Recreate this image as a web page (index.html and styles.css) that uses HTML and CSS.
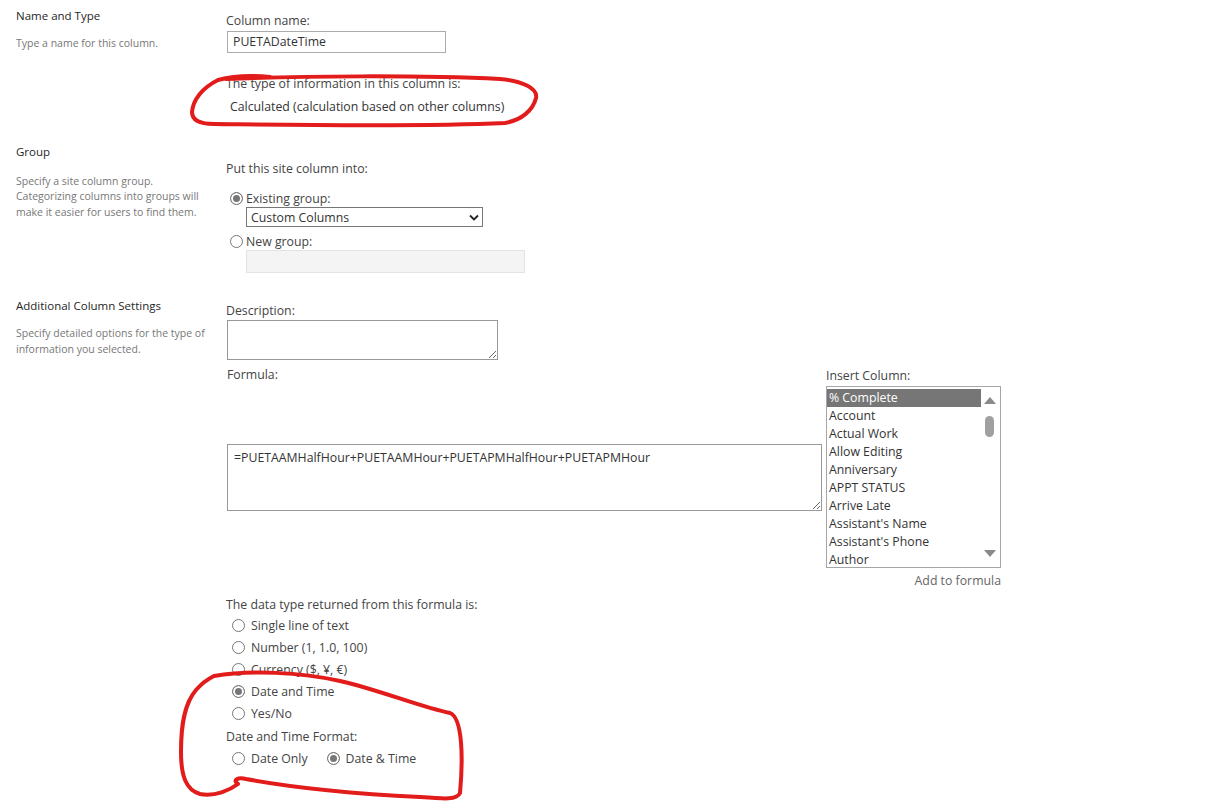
FILE: index.html
```html
<!DOCTYPE html>
<html lang="en">
<head>
    <meta charset="UTF-8">
    <title>Create Site Column</title>
    <link rel="stylesheet" href="styles.css">
</head>
<body>
    <div class="page">
        <!-- Name and Type -->
        <div class="section sec-name">
            <div class="side">
                <div class="side-title">Name and Type</div>
                <div class="side-desc">Type a name for this column.</div>
            </div>
            <div class="main">
                <div class="label">Column name:</div>
                <input class="text-input name-input" type="text" value="PUETADateTime">
                <div class="label type-label">The type of information in this column is:</div>
                <div class="label type-value">Calculated (calculation based on other columns)</div>
            </div>
        </div>

        <!-- Group -->
        <div class="section sec-group">
            <div class="side">
                <div class="side-title">Group</div>
                <div class="side-desc desc-group">Specify a site column group.<br>Categorizing columns into groups will<br>make it easier for users to find them.</div>
            </div>
            <div class="main">
                <div class="label">Put this site column into:</div>
                <label class="radio-row group-radio first">
                    <input type="radio" name="grp" checked>
                    <span>Existing group:</span>
                </label>
                <div class="select-wrap">
                    <select class="select">
                        <option>Custom Columns</option>
                    </select>
                    <svg class="chevron" width="10" height="7" viewBox="0 0 10 7"><path d="M1 1.5 L5 5.5 L9 1.5" fill="none" stroke="#222" stroke-width="1.8"/></svg>
                </div>
                <label class="radio-row group-radio second">
                    <input type="radio" name="grp">
                    <span>New group:</span>
                </label>
                <input class="text-input new-group" type="text" disabled>
            </div>
        </div>

        <!-- Additional Column Settings -->
        <div class="section sec-extra">
            <div class="side">
                <div class="side-title">Additional Column Settings</div>
                <div class="side-desc">Specify detailed options for the type of<br>information you selected.</div>
            </div>
            <div class="main">
                <div class="label">Description:</div>
                <textarea class="desc-box"></textarea>

                <div class="formula-row">
                    <div class="formula-left">
                        <div class="label">Formula:</div>
                        <textarea class="formula-box">=PUETAAMHalfHour+PUETAAMHour+PUETAPMHalfHour+PUETAPMHour</textarea>
                    </div>
                    <div class="formula-right">
                        <div class="label">Insert Column:</div>
                        <div class="listbox">
                            <div class="list-items">
                                <div class="item selected">% Complete</div>
                                <div class="item">Account</div>
                                <div class="item">Actual Work</div>
                                <div class="item">Allow Editing</div>
                                <div class="item">Anniversary</div>
                                <div class="item">APPT STATUS</div>
                                <div class="item">Arrive Late</div>
                                <div class="item">Assistant's Name</div>
                                <div class="item">Assistant's Phone</div>
                                <div class="item">Author</div>
                            </div>
                            <div class="scrollbar">
                                <span class="arrow up"></span>
                                <span class="thumb"></span>
                                <span class="arrow down"></span>
                            </div>
                        </div>
                        <div class="add-link">Add to formula</div>
                    </div>
                </div>

                <div class="label result-label">The data type returned from this formula is:</div>
                <div class="radio-list">
                    <label class="radio-row"><input type="radio" name="rt"><span>Single line of text</span></label>
                    <label class="radio-row"><input type="radio" name="rt"><span>Number (1, 1.0, 100)</span></label>
                    <label class="radio-row"><input type="radio" name="rt"><span>Currency ($, ¥, €)</span></label>
                    <label class="radio-row"><input type="radio" name="rt" checked><span>Date and Time</span></label>
                    <label class="radio-row"><input type="radio" name="rt"><span>Yes/No</span></label>
                </div>
                <div class="label format-label">Date and Time Format:</div>
                <div class="format-row">
                    <label class="radio-row"><input type="radio" name="fmt"><span>Date Only</span></label>
                    <label class="radio-row"><input type="radio" name="fmt" checked><span>Date &amp; Time</span></label>
                </div>
            </div>
        </div>
    </div>

    <!-- hand-drawn marks over the screenshot -->
    <svg class="marks" viewBox="0 0 1227 803">
        <path d="M226 79 C300 76 420 75 500 79 C522 81 538 88 536 98 C533 110 522 120 505 123 C420 127 300 125 214 124 C200 124 192 121 192 112 C193 100 202 88 218 80 C240 74 260 76 270 77"
              fill="none" stroke="#e21b1b" stroke-width="4" stroke-linecap="round" stroke-linejoin="round"/>
        <path d="M214 676 C250 670 300 672 340 681 C380 690 420 707 450 713 C463 718 463 760 460 793 C457 800 445 799 420 797 C360 794 300 789 246 779 C238 777 232 780 238 784 C230 790 215 797 200 794 C186 790 181 776 181 752 C181 726 184 704 196 690 C202 683 208 679 214 676"
              fill="none" stroke="#e21b1b" stroke-width="4" stroke-linecap="round" stroke-linejoin="round"/>
    </svg>
</body>
</html>
```

FILE: styles.css
```css
html {
    overflow: hidden;
}
body {
    margin: 0;
    padding: 0;
    min-height: 803px;
    background-color: #fff;
    font-family: "Open Sans", "Noto Sans", Arial, sans-serif;
    color: #444;
    position: relative;
}
.page {
    padding-left: 16px;
}
.section {
    display: grid;
    grid-template-columns: 210px 1fr;
}
.side-title {
    font-size: 11.5px;
    line-height: 16px;
    color: #262626;
}
.side-desc {
    font-size: 10.5px;
    line-height: 15.5px;
    color: #777;
    margin-top: 12px;
}
.desc-group {
    margin-top: 14px;
}
.label {
    font-size: 12.3px;
    line-height: 17px;
    color: #444;
}

/* Name and Type */
.sec-name {
    padding-top: 8px;
}
.sec-name .main {
    padding-top: 3.5px;
}
.text-input {
    display: block;
    box-sizing: border-box;
    font-family: inherit;
    font-size: 12.3px;
    color: #333;
    border: 1px solid #ababab;
    padding: 0 5px;
    margin: 2px 0 0 1px;
    outline: none;
}
.name-input {
    width: 219px;
    height: 22px;
}
.type-label {
    margin-top: 22px;
}
.type-value {
    margin-top: 6px;
    padding-left: 4px;
    color: #333;
}

/* Group */
.sec-group {
    padding-top: 29px;
}
.sec-group .main {
    padding-top: 16.5px;
}
.radio-row {
    display: flex;
    align-items: center;
    height: 22px;
    font-size: 12.3px;
    color: #444;
}
.radio-row input {
    appearance: none;
    -webkit-appearance: none;
    box-sizing: border-box;
    width: 13px;
    height: 13px;
    margin: 0 6px 0 6px;
    border: 1px solid #777;
    border-radius: 50%;
    background: #fff;
}
.radio-row input:checked {
    background: #777;
    box-shadow: inset 0 0 0 2px #fff;
}
.group-radio input {
    margin: 0 3px 0 4px;
}
.group-radio.first {
    margin-top: 13px;
    height: 17px;
}
.group-radio.second {
    margin-top: 6px;
    height: 17px;
}
.select-wrap {
    position: relative;
    width: 237px;
    margin-left: 20px;
}
.select {
    appearance: none;
    -webkit-appearance: none;
    display: block;
    width: 237px;
    height: 20px;
    box-sizing: border-box;
    border: 1px solid #767676;
    border-radius: 0;
    background: #fff;
    font-family: inherit;
    font-size: 12.3px;
    color: #333;
    padding: 0 4px;
}
.chevron {
    position: absolute;
    right: 4px;
    top: 7px;
}
.new-group {
    width: 279px;
    height: 23px;
    margin: 0 0 0 20px;
    background: #f4f4f4;
    border-color: #e3e3e3;
}

/* Additional Column Settings */
.sec-extra {
    padding-top: 25px;
}
.sec-extra .main {
    padding-top: 3.5px;
}
.desc-box,
.formula-box {
    display: block;
    box-sizing: border-box;
    border: 1px solid #999;
    font-family: inherit;
    font-size: 12.3px;
    color: #333;
    outline: none;
    margin-left: 1px;
}
.desc-box {
    width: 271px;
    height: 40px;
    margin-top: 1px;
}
.formula-row {
    display: flex;
    align-items: flex-start;
    margin-top: 6.5px;
}
.formula-left {
    width: 600px;
}
.formula-left .label {
    padding-left: 1px;
}
.formula-box {
    width: 595px;
    height: 67px;
    margin-top: 60.5px;
    padding: 4px 6px;
    resize: both;
}
.formula-right {
    display: flex;
    flex-direction: column;
    width: 175px;
    padding-top: 1px;
}
.listbox {
    display: flex;
    box-sizing: border-box;
    height: 182px;
    border: 1px solid #a6a6a6;
    margin-top: 2px;
}
.list-items {
    flex: 1;
    padding-top: 2px;
}
.item {
    font-size: 12.3px;
    line-height: 18px;
    padding-left: 2px;
    color: #333;
    white-space: nowrap;
}
.item.selected {
    background: #767676;
    color: #fff;
}
.scrollbar {
    position: relative;
    width: 19px;
    background: #fff;
}
.arrow {
    position: absolute;
    left: 3px;
    width: 0;
    height: 0;
    border-left: 6px solid transparent;
    border-right: 6px solid transparent;
}
.arrow.up {
    top: 10px;
    border-bottom: 7px solid #8a8a8a;
}
.arrow.down {
    bottom: 10px;
    border-top: 7px solid #8a8a8a;
}
.thumb {
    position: absolute;
    left: 4px;
    top: 29px;
    width: 9px;
    height: 21px;
    border-radius: 5px;
    background: #a0a0a0;
}
.add-link {
    font-size: 12.3px;
    line-height: 17px;
    color: #666;
    text-align: right;
    margin-top: 4px;
}
.result-label {
    margin-top: 7px;
}
.radio-list {
    margin-top: 1.5px;
}
.format-label {
    margin-top: 3.5px;
}
.format-row {
    display: flex;
    margin-top: 2px;
}
.format-row .radio-row + .radio-row {
    margin-left: 13px;
}

/* annotation overlay */
.marks {
    position: absolute;
    top: 0;
    left: 0;
    width: 1227px;
    height: 803px;
    pointer-events: none;
}
```
